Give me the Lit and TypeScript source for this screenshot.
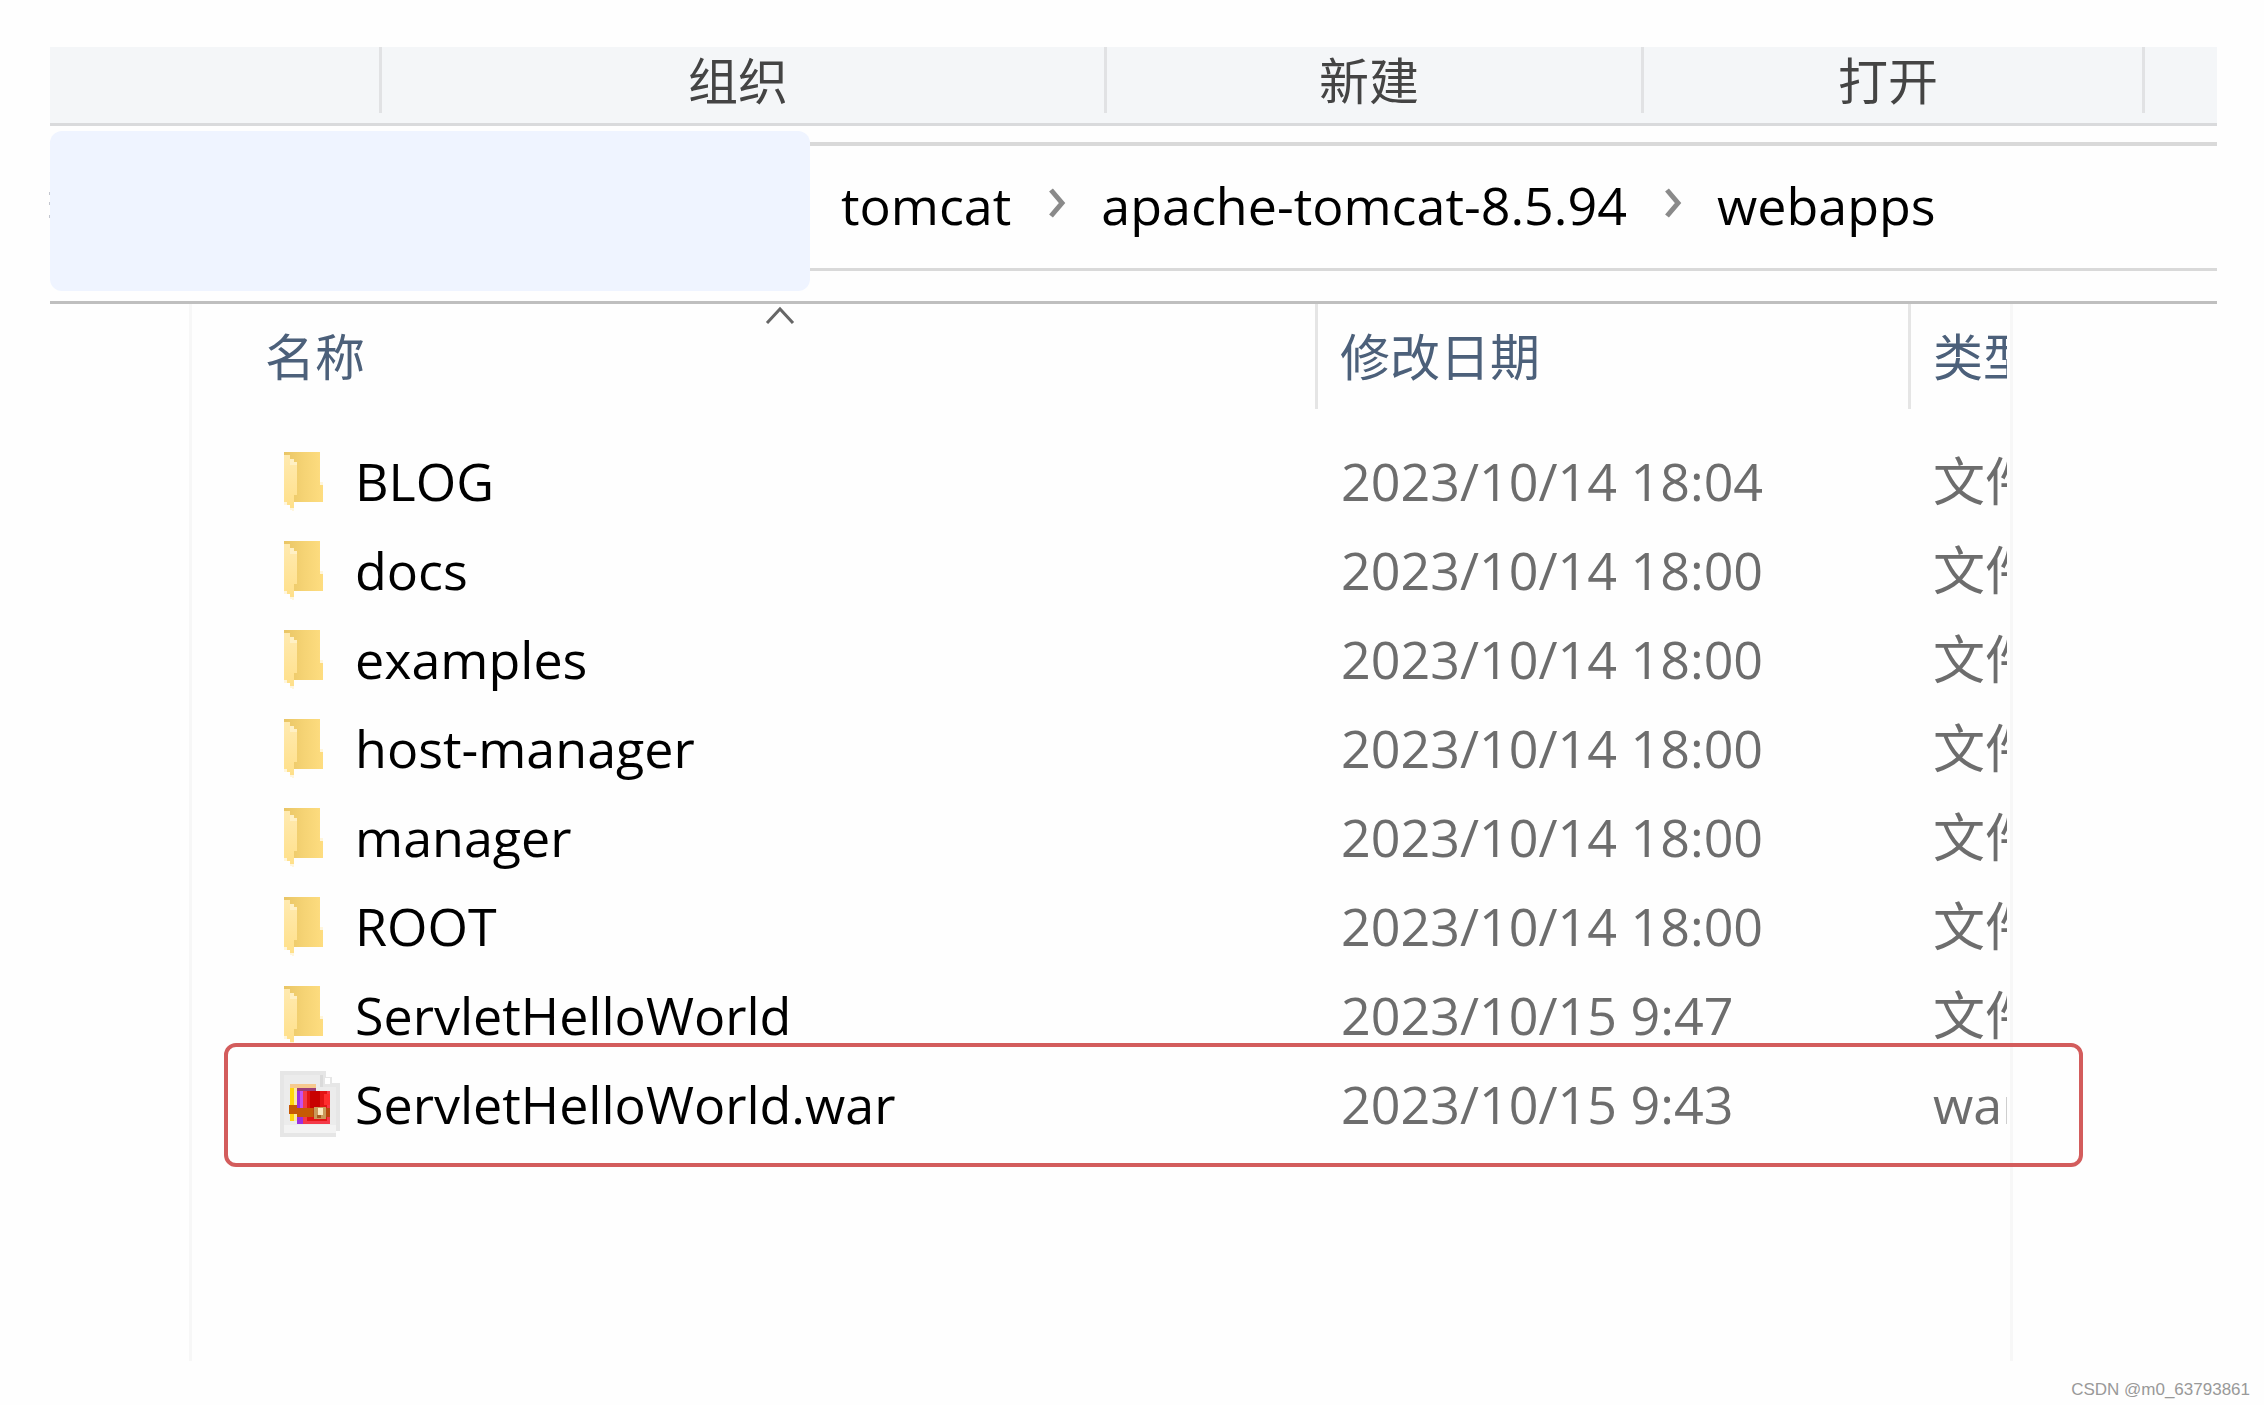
import { LitElement, html, css } from "lit";
import { customElement } from "lit/decorators.js";
import { classMap } from "lit/directives/class-map.js";

interface Entry {
  name: string;
  date: string;
  type: string;
  kind: "folder" | "archive";
  marked?: boolean;
}

const FOLDER_TYPE = "文件夹";

const ENTRIES: Entry[] = [
  { name: "BLOG", date: "2023/10/14 18:04", type: FOLDER_TYPE, kind: "folder" },
  { name: "docs", date: "2023/10/14 18:00", type: FOLDER_TYPE, kind: "folder" },
  { name: "examples", date: "2023/10/14 18:00", type: FOLDER_TYPE, kind: "folder" },
  { name: "host-manager", date: "2023/10/14 18:00", type: FOLDER_TYPE, kind: "folder" },
  { name: "manager", date: "2023/10/14 18:00", type: FOLDER_TYPE, kind: "folder" },
  { name: "ROOT", date: "2023/10/14 18:00", type: FOLDER_TYPE, kind: "folder" },
  { name: "ServletHelloWorld", date: "2023/10/15 9:47", type: FOLDER_TYPE, kind: "folder" },
  { name: "ServletHelloWorld.war", date: "2023/10/15 9:43", type: "war", kind: "archive", marked: true },
];

const folderIcon = html`<svg class="icon" viewBox="0 0 60 66" aria-hidden="true">
  <defs>
    <linearGradient id="back" x1="0" x2="1">
      <stop offset="0" stop-color="#e9c565" />
      <stop offset="0.5" stop-color="#f5d374" />
      <stop offset="1" stop-color="#fedd80" />
    </linearGradient>
    <linearGradient id="flap" x1="0" x2="0" y1="0" y2="1">
      <stop offset="0" stop-color="#ffeab0" />
      <stop offset="1" stop-color="#ffe08a" />
    </linearGradient>
  </defs>
  <path fill="url(#back)" d="M4 4H40V34H43V54H8V10H4Z" />
  <path fill="url(#flap)" d="M4 7H10V11H14V14H17V47H14V60H10V57H7V54H4Z" />
  <path fill="#fff0c4" d="M10 11H14V14H17V17H10Z" />
  <path fill="#fff6dc" d="M10 60H14V63H12V62H10ZM4 54H7V57H4ZM40 34H43V37H40Z" />
</svg>`;

const archiveIcon = html`<svg class="icon" viewBox="0 0 60 66" aria-hidden="true">
  <path fill="#e6e6e6" d="M0 0H46V6H52V12H60V60H56V66H0Z" />
  <path fill="#ececec" d="M4 4H40V16H56V62H4Z" />
  <path fill="#f3f3f3" d="M4 54H56V62H4Z" />
  <path fill="#dadada" d="M40 4H43V16H40Z" />
  <path fill="#ffffff" d="M45 7H50V13H45Z" />
  <path fill="#f6c98e" d="M10 13H36V17H10Z" />
  <path fill="#ffd60a" d="M10 17H14V50H10Z" />
  <path fill="#fbe9a0" d="M14 17H17V50H14Z" />
  <path fill="#9a2fe0" d="M17 19H23V53H17Z" />
  <path fill="#c552ef" d="M20 20H23V40H20Z" />
  <path fill="#f43a48" d="M23 20H50V53H23Z" />
  <path fill="#e31414" d="M27 20H47V50H27Z" />
  <path fill="#c80000" d="M30 20H40V38H30Z" />
  <path fill="#ff2e2e" d="M44 23H50V34H44Z" />
  <path fill="#9c3c78" d="M17 17H36V20H17Z" />
  <path fill="#c65a05" d="M9 34H17V37H34V46H17V43H9Z" />
  <path fill="#b8480e" d="M33 37H50V46H33Z" />
  <path fill="#c99a5a" d="M34 36H46V48H34Z" />
  <path fill="#fbe9bf" d="M38 37H43V44H38Z" />
  <path fill="#a85a20" d="M37 44H41V47H37Z" />
</svg>`;

const chevron = html`<svg class="chevron" viewBox="0 0 20 30" aria-hidden="true">
  <path d="M4 2L15 15L4 28" fill="none" stroke="#8a8a8a" stroke-width="5" />
</svg>`;

@customElement("app-root")
export class AppRoot extends LitElement {
  static styles = css`
    :host {
      display: block;
      background: #fefefe;
      color: #000;
      font-family: "Open Sans", "Noto Sans CJK SC", sans-serif;
      font-size: 52px;
      line-height: 72px;
    }
    .window {
      padding: 47px 47px 0 50px;
    }
    .ribbon {
      display: grid;
      grid-template-columns: 332fr 725fr 537fr 501fr 72fr;
      height: 76px;
      background: #f4f6f8;
      border-bottom: 3px solid #d9dadc;
      color: #444;
      font-size: 50px;
      text-align: center;
    }
    .group {
      box-sizing: border-box;
      height: 66px;
      padding-right: 10px;
      line-height: 68px;
      border-right: 3px solid #e1e2e4;
    }
    .group:last-child {
      border-right: 0;
    }
    .address {
      display: grid;
      grid-template-columns: 760fr 1407fr;
      align-items: start;
      padding: 5px 0 10px;
      border-bottom: 3px solid #bfbfbf;
    }
    .cover {
      position: relative;
      height: 160px;
      border-radius: 12px;
      background: #eff4ff;
    }
    .cover::before {
      content: "";
      position: absolute;
      top: 61px;
      left: -1px;
      width: 1px;
      height: 26px;
      background: linear-gradient(#c3c6cf 3px, transparent 3px 10px, #c3c6cf 10px 13px, transparent 13px 23px, #c3c6cf 23px);
    }
    .crumbs {
      display: flex;
      align-items: center;
      box-sizing: border-box;
      height: 129px;
      margin-top: 11px;
      padding: 0 0 4px 31px;
      border-top: 4px solid #d9d9d9;
      border-bottom: 3px solid #d9d9d9;
      white-space: nowrap;
    }
    .crumbs a {
      color: inherit;
      text-decoration: none;
    }
    .chevron {
      flex: none;
      width: 20px;
      height: 30px;
      margin: 0 34px 4px 36px;
    }
    .body {
      display: grid;
      grid-template-columns: 139fr 1824fr 204fr;
    }
    .pane {
      grid-column: 2;
      padding-bottom: 213px;
      border: solid #f7f7f7;
      border-width: 0 3px;
    }
    table {
      width: 100%;
      table-layout: fixed;
      border-collapse: collapse;
    }
    .col-date {
      width: 593px;
    }
    .col-type {
      width: 102px;
    }
    th,
    td {
      padding: 0;
      text-align: left;
      font-weight: 400;
      white-space: nowrap;
    }
    th {
      height: 132px;
      vertical-align: top;
    }
    .head {
      position: relative;
      display: flex;
      align-items: center;
      height: 105px;
      margin-right: 3px;
      padding-left: 22px;
      overflow: hidden;
      border-left: 3px solid #e5e5e5;
    }
    .head.first {
      padding-left: 70px;
      border-left-color: transparent;
    }
    .head button {
      padding: 0;
      border: 0;
      background: none;
      color: #4c607a;
      font: inherit;
      font-size: 50px;
      line-height: 72px;
    }
    .sort {
      position: absolute;
      top: 2px;
      left: 51%;
      width: 30px;
      height: 18px;
    }
    td {
      height: 89px;
      color: #6d6d6d;
    }
    .name {
      display: flex;
      align-items: center;
      gap: 15px;
      padding-left: 88px;
      color: #000;
    }
    .icon {
      flex: none;
      width: 60px;
      height: 66px;
    }
    .date {
      padding-left: 26px;
    }
    .type {
      margin-right: 3px;
      padding-left: 25px;
      overflow: hidden;
    }
    .marked {
      position: relative;
    }
    .marked .name::after {
      content: "";
      position: absolute;
      inset: -16px -73px -19px 32px;
      border: 4px solid #d35c5c;
      border-radius: 12px;
    }
    .credit {
      padding: 14px 14px 0 0;
      color: #999;
      font-family: "Liberation Sans", sans-serif;
      font-size: 17px;
      line-height: 30px;
      text-align: right;
    }
  `;

  private renderRow(e: Entry) {
    return html`<tr class=${classMap({ marked: !!e.marked })}>
      <td><div class="name">${e.kind === "folder" ? folderIcon : archiveIcon}<span>${e.name}</span></div></td>
      <td><div class="date">${e.date}</div></td>
      <td><div class="type">${e.type}</div></td>
    </tr>`;
  }

  render() {
    return html`
      <main class="window">
        <div class="ribbon">
          <div class="group"></div>
          <div class="group">组织</div>
          <div class="group">新建</div>
          <div class="group">打开</div>
          <div class="group"></div>
        </div>
        <div class="address">
          <div class="cover"></div>
          <nav class="crumbs">
            <a href="#tomcat">tomcat</a>${chevron}<a href="#apache">apache-tomcat-8.5.94</a>${chevron}<a href="#webapps">webapps</a>
          </nav>
        </div>
        <div class="body">
          <section class="pane">
            <table>
              <colgroup>
                <col />
                <col class="col-date" />
                <col class="col-type" />
              </colgroup>
              <thead>
                <tr>
                  <th>
                    <div class="head first">
                      <button type="button">名称</button>
                      <svg class="sort" viewBox="0 0 30 18" aria-hidden="true">
                        <path d="M2 17L15 3L28 17" fill="none" stroke="#666" stroke-width="3" />
                      </svg>
                    </div>
                  </th>
                  <th><div class="head"><button type="button">修改日期</button></div></th>
                  <th><div class="head"><button type="button">类型</button></div></th>
                </tr>
              </thead>
              <tbody>
                ${ENTRIES.map((e) => this.renderRow(e))}
              </tbody>
            </table>
          </section>
        </div>
      </main>
      <footer class="credit">CSDN @m0_63793861</footer>
    `;
  }
}
